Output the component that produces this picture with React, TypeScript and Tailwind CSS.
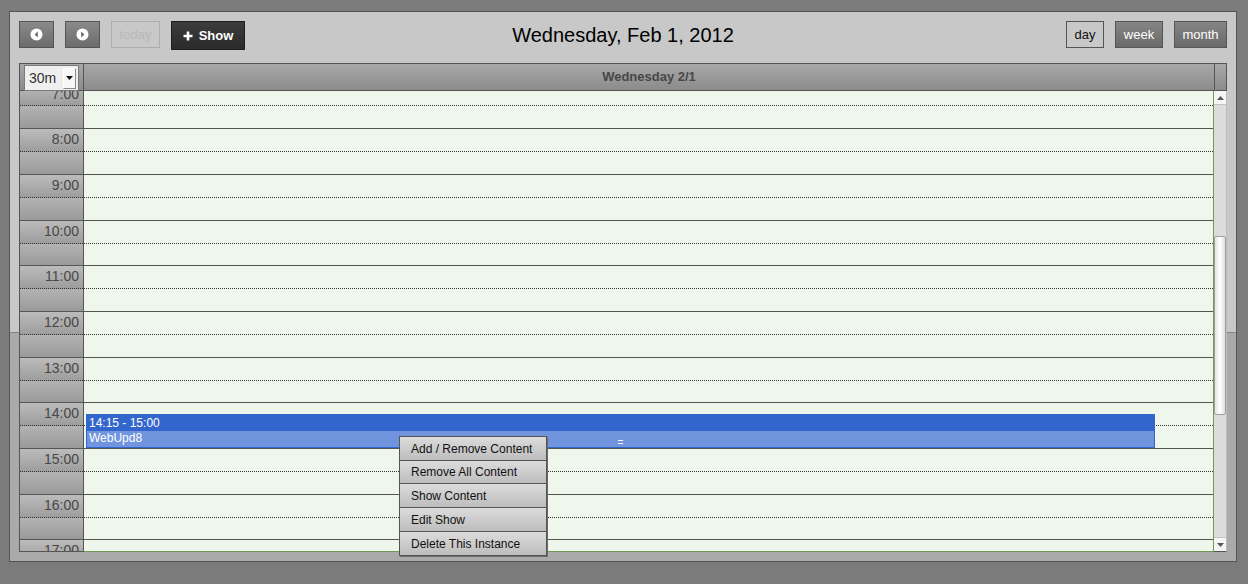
import React from "react";

const font = { fontFamily: '"Liberation Sans", Arial, sans-serif' };

type Slot = { label: string; hour: boolean };

const slots: Slot[] = [];
for (let h = 7; h <= 17; h++) {
  slots.push({ label: `${h}:00`, hour: true });
  slots.push({ label: "", hour: false });
}

const menuItems = [
  { label: "Add / Remove Content", h: "h-[23px]" },
  { label: "Remove All Content", h: "h-[23px]" },
  { label: "Show Content", h: "h-[24px]" },
  { label: "Edit Show", h: "h-[24px]" },
  { label: "Delete This Instance", h: "h-[24px]" },
];

function CircleArrow({ dir }: { dir: "left" | "right" }) {
  return (
    <svg width="13" height="13" viewBox="0 0 13 13">
      <circle cx="6.5" cy="6.5" r="6" fill="#fff" />
      {dir === "left" ? (
        <path d="M7.8 3.5 L4.6 6.5 L7.8 9.5 Z" fill="#6a6a6a" />
      ) : (
        <path d="M5.2 3.5 L8.4 6.5 L5.2 9.5 Z" fill="#6a6a6a" />
      )}
    </svg>
  );
}

function NavButton({ dir }: { dir: "left" | "right" }) {
  return (
    <button className="w-[35px] h-[27px] flex items-center justify-center border border-[#555] bg-linear-to-b from-[#8a8a8a] to-[#6c6c6c]">
      <CircleArrow dir={dir} />
    </button>
  );
}

function ViewButton({ label, w, active }: { label: string; w: string; active?: boolean }) {
  return (
    <button
      className={
        active
          ? `${w} h-[27px] border border-[#555] bg-[#c8c8c8] text-[13px] text-[#111]`
          : `${w} h-[27px] border border-[#555] bg-linear-to-b from-[#858585] to-[#6a6a6a] text-[13px] text-white`
      }
    >
      {label}
    </button>
  );
}

function Toolbar() {
  return (
    <div className="h-[51px] px-[9px] pt-[9px] grid grid-cols-[1fr_auto_1fr] items-start">
      <div className="flex gap-[11px]">
        <NavButton dir="left" />
        <NavButton dir="right" />
        <button className="w-[49px] h-[27px] border border-[#adadad] text-[13px] text-[#b8b8b8]">
          today
        </button>
        <button className="w-[74px] h-[29px] flex items-center justify-center gap-[6px] border border-[#1e1e1e] bg-linear-to-b from-[#3c3c3c] to-[#2b2b2b] text-[13px] font-bold text-white">
          <svg width="10" height="10" viewBox="0 0 10 10">
            <path d="M5 0.5 V9.5 M0.5 5 H9.5" stroke="#fff" strokeWidth="2.6" />
          </svg>
          Show
        </button>
      </div>
      <div className="pt-[1px] text-[20px] leading-[26px] text-black">Wednesday, Feb 1, 2012</div>
      <div className="flex justify-end gap-[11px]">
        <ViewButton label="day" w="w-[38px]" active />
        <ViewButton label="week" w="w-[48px]" />
        <ViewButton label="month" w="w-[53px]" />
      </div>
    </div>
  );
}

function SlotSelect() {
  return (
    <div className="w-[55px] h-[26px] mt-[1px] ml-[4px] border border-[#7a7a7a] bg-[#efefef] flex items-center justify-between pl-[4px] pr-[2px]">
      <span className="text-[14px] text-[#333]">30m</span>
      <div className="w-[13px] h-[21px] bg-[#f7f7f7] border-t border-l border-t-white border-l-white border-r border-b border-r-[#8a8a8a] border-b-[#8a8a8a] flex items-center justify-center">
        <svg width="7" height="4" viewBox="0 0 7 4">
          <path d="M0 0 H7 L3.5 4 Z" fill="#111" />
        </svg>
      </div>
    </div>
  );
}

function Scrollbar() {
  return (
    <div className="w-[13px] flex flex-col bg-[#dcdcdc] border-r border-r-[#bdbdbd] border-b border-b-[#555]">
      <div className="h-[14px] bg-[#f5f5f5] border-b border-[#c4c4c4] flex items-center justify-center">
        <svg width="7" height="4" viewBox="0 0 7 4">
          <path d="M0 4 H7 L3.5 0 Z" fill="#555" />
        </svg>
      </div>
      <div className="flex-1 pt-[131px]">
        <div className="h-[179px] rounded-[2px] border border-[#9e9e9e] bg-linear-to-r from-[#e4e4e4] via-white to-[#dedede]" />
      </div>
      <div className="h-[14px] bg-[#f5f5f5] border-t border-[#c4c4c4] flex items-center justify-center">
        <svg width="7" height="4" viewBox="0 0 7 4">
          <path d="M0 0 H7 L3.5 4 Z" fill="#555" />
        </svg>
      </div>
    </div>
  );
}

function Grid() {
  return (
    <div className="mx-[9px] w-[1208px]">
      <div className="flex h-[28px] border-y border-[#555] bg-linear-to-b from-[#a8a8a8] to-[#8b8b8b]">
        <div className="w-[65px] border-x border-[#555]">
          <SlotSelect />
        </div>
        <div className="w-[1130px] flex items-center justify-center text-[13px] font-bold text-[#474747]">
          Wednesday 2/1
        </div>
        <div className="w-[13px] border-x border-[#555]" />
      </div>
      <div className="flex h-[461px]">
        <div className="w-[65px] overflow-hidden border-x border-b border-[#555]">
          <div className="mt-[-8.4px]">
            {slots.map((s, i) => (
              <div
                key={i}
                className={
                  s.hour
                    ? "h-[22.85px] border-t border-[#555] bg-linear-to-b from-[#bcbcbc] to-[#9d9d9d] text-right pr-[4px] pt-[2px] text-[14px] leading-[16px] text-[#474747]"
                    : "h-[22.85px] border-t border-dotted border-[#333] bg-linear-to-b from-[#b3b3b3] to-[#9a9a9a]"
                }
              >
                {s.label}
              </div>
            ))}
          </div>
        </div>
        <div className="relative w-[1130px] overflow-hidden bg-[#eff6ec] border-r border-b border-[#6e9a56]">
          <div className="mt-[-8.4px]">
            {slots.map((s, i) => (
              <div
                key={i}
                className={
                  s.hour
                    ? "h-[22.85px] border-t border-[#555]"
                    : "h-[22.85px] border-t border-dotted border-[#333]"
                }
              />
            ))}
          </div>
          <div className="absolute top-[323px] left-[2px] w-[1069px] h-[34px] border border-[#3366cc] flex flex-col text-[12px] text-white">
            <div className="h-[16px] bg-[#3366cc] pl-[2px] leading-[16px]">14:15 - 15:00</div>
            <div className="relative flex-1 bg-[#7094dd] pl-[2px] leading-[15px]">
              WebUpd8
              <span className="absolute left-1/2 bottom-[-2px] -translate-x-1/2 text-[10px] leading-[12px]">=</span>
            </div>
          </div>
        </div>
        <Scrollbar />
      </div>
    </div>
  );
}

function ContextMenu() {
  return (
    <div className="absolute left-[399px] top-[436px] w-[148px] border border-[#555] shadow-[1px_1px_0_#6a6a6a] flex flex-col">
      {menuItems.map((m, i) => (
        <div
          key={m.label}
          className={`${m.h} ${i > 0 ? "border-t border-[#555]" : ""} flex items-center pl-[11px] bg-linear-to-b from-[#dcdcdc] to-[#bdbdbd] text-[12px] text-[#111]`}
        >
          {m.label}
        </div>
      ))}
    </div>
  );
}

export default function App() {
  return (
    <div style={font} className="relative w-[1248px] h-[584px] overflow-hidden bg-[#7b7b7b] pt-[11px] pl-[9px]">
      <div className="w-[1228px] h-[551px] border border-[#555] bg-[linear-gradient(to_bottom,#c8c8c8_320px,#858585_320px,#858585_321px,#aaaaaa_321px)]">
        <Toolbar />
        <Grid />
      </div>
      <ContextMenu />
    </div>
  );
}
